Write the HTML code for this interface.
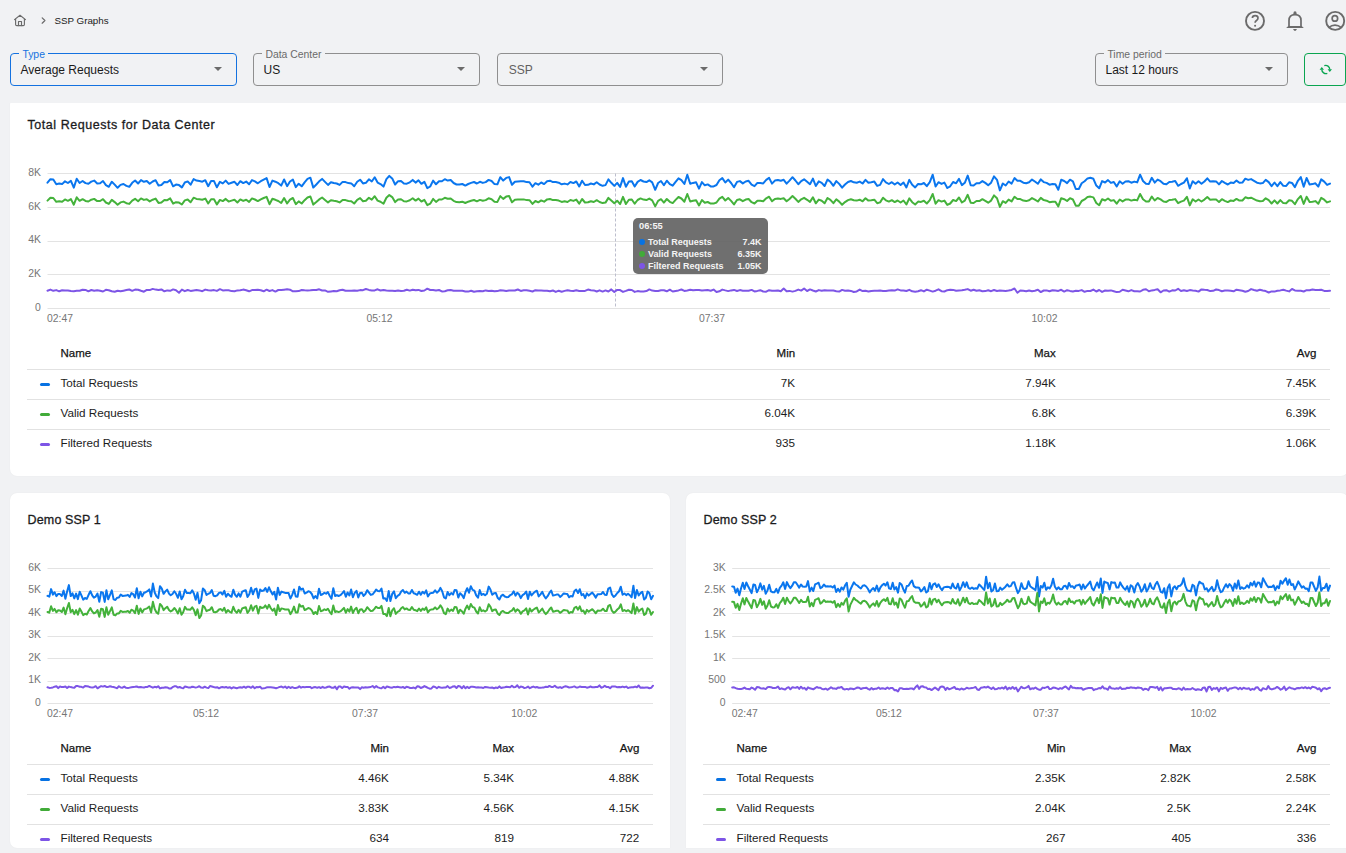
<!DOCTYPE html>
<html><head><meta charset="utf-8"><title>SSP Graphs</title>
<style>
*{box-sizing:border-box}
html,body{margin:0;padding:0}
body{width:1346px;height:853px;overflow:hidden;background:#f1f2f4;font-family:"Liberation Sans", sans-serif;color:#1d1d1f;position:relative}
.abs{position:absolute}
.crumb{position:absolute;left:54.4px;top:13.8px;font-size:9.8px;line-height:14px;color:#222}
.sel{position:absolute;top:53px;height:33px;border:1px solid #8f8f8f;border-radius:4px}
.sel .v{position:absolute;left:9.5px;top:9px;font-size:12px;line-height:14px;color:#1a1a1a;white-space:nowrap}
.sel .ph{color:#616161}
.sel .lg{position:absolute;top:-5.1px;left:8.1px;padding:0 3.3px;background:#f1f2f4;font-size:10.4px;line-height:12px;color:#6a6a6a;white-space:nowrap}
.sel .ar{position:absolute;right:14.5px;top:13px;width:0;height:0;border-left:4.3px solid transparent;border-right:4.3px solid transparent;border-top:4.9px solid #6b6b6b}
.sel.focus{border:1.4px solid #1472e0}
.sel.focus .lg{color:#1472e0}
.btn{position:absolute;left:1304px;top:53px;width:42px;height:33px;border:1.2px solid #0aa550;border-radius:4px}
.scroll{position:absolute;left:0;top:103px;width:1346px;height:750px;overflow:hidden}
.card{position:absolute;background:#fff;border-radius:7px;overflow:hidden;box-shadow:0 0 1.5px rgba(0,0,0,0.06)}
.ttl{position:absolute;left:17.6px;top:18.9px;font-size:12.5px;line-height:16px;white-space:nowrap;color:#1b1b1d;-webkit-text-stroke:0.3px #1b1b1d;letter-spacing:0.13px}
.ch{position:absolute;left:0;top:0}
.yl{font-family:"Liberation Sans", sans-serif;font-size:10.4px;fill:#767676}
.tb{position:absolute;left:17px;border-collapse:collapse;table-layout:fixed;font-size:11.7px;color:#1c1c1c}
.tb td{height:30px;padding:0 13.7px 0 0;text-align:right;border-bottom:1px solid #e2e2e2;white-space:nowrap;line-height:14px;vertical-align:middle}
.tb tr:last-child td{border-bottom:none}
.tb td u{text-decoration:none;position:relative;top:-1.5px}
.tb td.nm{width:40%;text-align:left;padding-left:33.5px;position:relative}
.tb tr.hd td{height:29.5px;font-size:11.5px;color:#151515;-webkit-text-stroke:0.25px #151515}
.tb td i{position:absolute;left:13px;top:12.8px;width:10px;height:3px;border-radius:2px}
.tip{position:absolute;left:623px;top:120px;width:135px;height:56px;background:rgba(100,100,100,0.93);border-radius:5px;color:#f4f4f4;font-weight:bold;font-size:9px;line-height:12px}
.tip .t{position:absolute;left:6px;top:2.3px;font-size:9.3px}
.tip .r{position:absolute;left:5.5px;right:6.5px;height:12px}
.tip .r b{display:inline-block;width:6.3px;height:6.3px;border-radius:50%;vertical-align:top;margin-top:2.6px;margin-right:3.2px}
.tip .r span{position:absolute;right:0;top:0}
</style></head>
<body>
<svg class="abs" style="left:0;top:0" width="1346" height="103" viewBox="0 0 1346 103">
 <g fill="none" stroke="#6b6b6b" stroke-width="1.15" stroke-linejoin="round" stroke-linecap="round">
  <path d="M14.5 19.6 L20 15.3 L25.5 19.6"/>
  <path d="M15.6 19 V24.4 Q15.6 25.6 16.8 25.6 H23.2 Q24.4 25.6 24.4 24.4 V19"/>
  <path d="M18.5 25.6 V21.5 H21.5 V25.6"/>
  <path d="M42.2 17.9 L44.9 20.55 L42.2 23.2" stroke-width="1.25"/>
 </g>
 <g fill="none" stroke="#6b6b6b" stroke-width="1.7">
  <circle cx="1255" cy="20.9" r="9.0" stroke-width="1.9"/>
  <circle cx="1335.2" cy="20.9" r="9.0" stroke-width="1.9"/>
  <circle cx="1334.9" cy="18.4" r="2.75" stroke-width="1.7"/>
  <path d="M1328.5 27.6 Q1335 22.6 1341.5 27.6" stroke-width="1.6"/>
  <path d="M1252.4 18.0 Q1252.4 15.6 1255.2 15.6 Q1258.0 15.6 1258.0 18.0 Q1258.0 19.4 1256.5 20.5 Q1255.1 21.4 1255.1 22.7" stroke-width="1.7"/>
 </g>
 <circle cx="1255.1" cy="25.8" r="1.05" fill="#6b6b6b"/>
 <path d="M1289.0 26.6 V20.6 Q1289.0 14.7 1295.0 14.7 Q1301.0 14.7 1301.0 20.6 V26.6" fill="none" stroke="#6b6b6b" stroke-width="1.7"/>
 <path d="M1293.2 14.3 L1293.8 11.8 Q1295.0 10.7 1296.2 11.8 L1296.8 14.3 Z" fill="#6b6b6b"/>
 <path d="M1286.2 28.1 L1288.3 25.9 H1301.7 L1303.8 28.1 Z" fill="#6b6b6b"/>
 <path d="M1293.0 28.9 H1297.0 L1295.8 30.8 H1294.2 Z" fill="#6b6b6b"/>
 <g fill="none" stroke="#0aa550" stroke-width="1.35" stroke-linecap="butt">
  <path d="M1324.3 65.6 A4.1 4.1 0 0 1 1329.8 69.4"/>
  <path d="M1327.3 73.3 A4.1 4.1 0 0 1 1321.8 69.6"/>
 </g>
 <path d="M1327.6 69.2 H1332 L1329.8 71.9 Z M1319.6 69.8 H1324 L1321.8 67.1 Z" fill="#0aa550"/>
</svg>
<div class="crumb">SSP Graphs</div>

<div class="sel focus" style="left:10px;width:227px"><span class="lg">Type</span><span class="v">Average Requests</span><i class="ar"></i></div>
<div class="sel" style="left:253px;width:227px"><span class="lg">Data Center</span><span class="v">US</span><i class="ar"></i></div>
<div class="sel" style="left:497px;width:226px"><span class="v ph" style="left:10.7px">SSP</span><i class="ar"></i></div>
<div class="sel" style="left:1095px;width:193px"><span class="lg">Time period</span><span class="v">Last 12 hours</span><i class="ar"></i></div>
<div class="btn"></div>

<div class="scroll">
 <div class="card" style="left:10px;top:-5px;width:1338px;height:378px">
  <div class="ttl" style="letter-spacing:0.53px">Total Requests for Data Center</div>
  <svg class="ch" width="1336" height="240" viewBox="0 0 1336 240">
<line x1="37.5" y1="75.5" x2="1320" y2="75.5" stroke="#e3e3e3" stroke-width="1"/>
<text x="30.9" y="77.8" text-anchor="end" class="yl">8K</text>
<line x1="37.5" y1="109.5" x2="1320" y2="109.5" stroke="#e3e3e3" stroke-width="1"/>
<text x="30.9" y="111.5" text-anchor="end" class="yl">6K</text>
<line x1="37.5" y1="143.5" x2="1320" y2="143.5" stroke="#e3e3e3" stroke-width="1"/>
<text x="30.9" y="145.3" text-anchor="end" class="yl">4K</text>
<line x1="37.5" y1="176.5" x2="1320" y2="176.5" stroke="#e3e3e3" stroke-width="1"/>
<text x="30.9" y="179.1" text-anchor="end" class="yl">2K</text>
<line x1="37.5" y1="210.5" x2="1320" y2="210.5" stroke="#e3e3e3" stroke-width="1"/>
<text x="30.9" y="212.8" text-anchor="end" class="yl">0</text>
<text x="37.0" y="223.8" text-anchor="start" class="yl">02:47</text>
<text x="369.5" y="223.8" text-anchor="middle" class="yl">05:12</text>
<text x="702.0" y="223.8" text-anchor="middle" class="yl">07:37</text>
<text x="1034.5" y="223.8" text-anchor="middle" class="yl">10:02</text>
<line x1="605.5" y1="75.5" x2="605.5" y2="210" stroke="#bcbecd" stroke-width="1" stroke-dasharray="3,2"/>
<polyline points="37.5,84.7 40.4,81.2 43.3,81.5 46.3,86.2 49.2,85.6 52.1,86.1 55.0,83.3 57.9,85.0 60.9,82.9 63.8,89.6 66.7,80.7 69.6,85.0 72.6,83.0 75.5,85.1 78.4,85.8 81.3,83.6 84.2,82.6 87.2,85.4 90.1,85.2 93.0,83.0 95.9,87.1 98.8,88.8 101.8,83.8 104.7,86.6 107.6,89.8 110.5,86.9 113.5,86.0 116.4,87.9 119.3,88.8 122.2,84.8 125.1,82.5 128.1,85.5 131.0,82.1 133.9,83.8 136.8,83.0 139.7,85.7 142.7,83.5 145.6,82.2 148.5,87.5 151.4,87.0 154.4,84.0 157.3,84.3 160.2,82.1 163.1,88.3 166.0,86.6 169.0,87.1 171.9,89.4 174.8,84.5 177.7,83.4 180.6,86.7 183.6,81.1 186.5,82.6 189.4,83.1 192.3,83.7 195.3,82.2 198.2,88.2 201.1,83.1 204.0,83.1 206.9,89.3 209.9,83.8 212.8,85.4 215.7,82.6 218.6,85.9 221.5,84.8 224.5,83.8 227.4,87.0 230.3,83.2 233.2,85.1 236.2,83.6 239.1,86.3 242.0,82.1 244.9,83.4 247.8,85.3 250.8,83.2 253.7,81.6 256.6,80.1 259.5,89.0 262.4,82.6 265.4,83.7 268.3,85.2 271.2,87.6 274.1,81.5 277.1,88.2 280.0,83.5 282.9,81.6 285.8,89.1 288.7,85.7 291.7,88.3 294.6,84.3 297.5,80.9 300.4,79.7 303.3,89.6 306.3,86.5 309.2,83.3 312.1,80.9 315.0,83.9 318.0,86.9 320.9,84.2 323.8,85.0 326.7,85.5 329.6,86.9 332.6,83.9 335.5,84.1 338.4,85.1 341.3,85.4 344.2,88.2 347.2,83.8 350.1,81.7 353.0,85.4 355.9,84.8 358.9,81.3 361.8,83.5 364.7,79.3 367.6,84.6 370.5,86.1 373.5,88.6 376.4,81.2 379.3,77.9 382.2,80.4 385.1,86.5 388.1,83.2 391.0,83.0 393.9,85.5 396.8,85.7 399.8,84.3 402.7,81.9 405.6,84.6 408.5,82.3 411.4,85.8 414.4,83.8 417.3,90.2 420.2,88.5 423.1,82.6 426.0,86.3 429.0,83.2 431.9,83.3 434.8,81.2 437.7,82.6 440.7,82.0 443.6,85.0 446.5,86.5 449.4,86.6 452.3,86.0 455.3,87.6 458.2,86.0 461.1,84.9 464.0,84.0 466.9,85.5 469.9,83.8 472.8,84.9 475.7,84.1 478.6,81.9 481.6,83.0 484.5,86.1 487.4,86.3 490.3,79.2 493.2,82.6 496.2,79.9 499.1,79.1 502.0,86.8 504.9,83.7 507.8,83.5 510.8,83.3 513.7,83.3 516.6,84.1 519.5,84.2 522.5,88.7 525.4,85.2 528.3,86.7 531.2,84.5 534.1,86.1 537.1,83.2 540.0,82.7 542.9,84.1 545.8,84.1 548.7,84.7 551.7,86.3 554.6,85.6 557.5,86.4 560.4,84.0 563.4,85.1 566.3,83.5 569.2,88.5 572.1,82.7 575.0,87.0 578.0,86.8 580.9,85.5 583.8,86.4 586.7,84.2 589.6,86.5 592.6,87.8 595.5,87.1 598.4,81.4 601.3,84.8 604.3,87.9 607.2,84.9 610.1,88.9 613.0,80.1 615.9,88.8 618.9,83.6 621.8,83.3 624.7,88.5 627.6,83.9 630.5,82.0 633.5,83.5 636.4,84.1 639.3,82.3 642.2,84.4 645.2,91.8 648.1,85.0 651.0,83.0 653.9,87.2 656.8,82.7 659.8,86.2 662.7,87.7 665.6,83.9 668.5,80.3 671.4,82.1 674.4,86.0 677.3,76.7 680.2,85.7 683.1,84.9 686.1,84.3 689.0,90.7 691.9,84.1 694.8,87.3 697.7,86.4 700.7,88.4 703.6,88.4 706.5,87.0 709.4,82.2 712.3,80.1 715.3,84.5 718.2,81.6 721.1,85.0 724.0,89.3 727.0,83.9 729.9,83.1 732.8,85.4 735.7,83.5 738.6,82.8 741.6,86.7 744.5,88.2 747.4,84.9 750.3,85.0 753.2,85.4 756.2,81.9 759.1,79.9 762.0,85.6 764.9,82.6 767.9,82.0 770.8,82.7 773.7,81.8 776.6,85.6 779.5,82.6 782.5,79.2 785.4,82.5 788.3,86.2 791.2,83.1 794.1,81.3 797.1,83.7 800.0,86.2 802.9,80.6 805.8,88.0 808.8,83.4 811.7,84.8 814.6,88.0 817.5,81.6 820.4,83.8 823.4,87.8 826.3,83.1 829.2,85.9 832.1,89.7 835.0,86.5 838.0,84.0 840.9,83.0 843.8,84.3 846.7,84.7 849.7,83.6 852.6,85.5 855.5,81.9 858.4,84.7 861.3,84.2 864.3,83.6 867.2,87.9 870.1,86.9 873.0,81.1 875.9,84.3 878.9,86.0 881.8,84.2 884.7,86.5 887.6,84.5 890.6,87.0 893.5,84.5 896.4,89.5 899.3,81.9 902.2,86.7 905.2,89.4 908.1,85.9 911.0,86.3 913.9,85.0 916.8,88.2 919.8,84.2 922.7,76.7 925.6,88.5 928.5,84.2 931.5,85.9 934.4,84.6 937.3,90.0 940.2,88.3 943.1,84.0 946.1,85.3 949.0,80.9 951.9,87.1 954.8,84.8 957.7,77.6 960.7,87.2 963.6,87.6 966.5,85.2 969.4,85.3 972.4,83.1 975.3,84.9 978.2,87.2 981.1,84.7 984.0,78.3 987.0,81.8 989.9,92.4 992.8,85.5 995.7,87.5 998.6,83.5 1001.6,85.6 1004.5,80.1 1007.4,82.7 1010.3,82.8 1013.3,84.7 1016.2,85.2 1019.1,84.2 1022.0,81.6 1024.9,83.5 1027.9,85.8 1030.8,81.4 1033.7,84.1 1036.6,84.9 1039.5,86.7 1042.5,86.0 1045.4,86.2 1048.3,91.8 1051.2,81.8 1054.2,83.0 1057.1,85.1 1060.0,81.7 1062.9,83.3 1065.8,91.0 1068.8,91.0 1071.7,85.2 1074.6,83.2 1077.5,80.4 1080.4,79.8 1083.4,80.8 1086.3,87.6 1089.2,90.3 1092.1,83.1 1095.1,84.5 1098.0,82.1 1100.9,84.9 1103.8,84.0 1106.7,88.5 1109.7,83.3 1112.6,85.7 1115.5,83.5 1118.4,83.2 1121.3,84.7 1124.3,83.6 1127.2,84.4 1130.1,76.7 1133.0,83.0 1136.0,85.8 1138.9,85.9 1141.8,79.8 1144.7,84.6 1147.6,81.6 1150.6,83.2 1153.5,85.8 1156.4,86.3 1159.3,84.0 1162.2,83.7 1165.2,82.9 1168.1,87.8 1171.0,86.0 1173.9,84.6 1176.9,80.2 1179.8,90.5 1182.7,83.2 1185.6,85.8 1188.5,83.3 1191.5,85.8 1194.4,83.5 1197.3,80.3 1200.2,83.6 1203.1,83.3 1206.1,83.4 1209.0,86.4 1211.9,83.0 1214.8,84.9 1217.8,86.5 1220.7,84.6 1223.6,85.1 1226.5,82.6 1229.4,84.7 1232.4,84.6 1235.3,80.7 1238.2,81.9 1241.1,81.1 1244.0,82.8 1247.0,84.7 1249.9,85.4 1252.8,85.1 1255.7,81.9 1258.7,84.1 1261.6,88.2 1264.5,84.5 1267.4,88.2 1270.3,84.1 1273.3,87.8 1276.2,87.9 1279.1,84.3 1282.0,84.9 1284.9,89.1 1287.9,82.8 1290.8,79.1 1293.7,88.7 1296.6,80.0 1299.6,86.6 1302.5,86.1 1305.4,85.3 1308.3,88.6 1311.2,81.4 1314.2,83.6 1317.1,86.9 1320.0,85.6" fill="none" stroke="#0a76ee" stroke-width="2" stroke-linejoin="round" stroke-linecap="round"/>
<polyline points="37.5,102.6 40.4,99.7 43.3,100.0 46.3,103.8 49.2,103.3 52.1,103.8 55.0,101.4 57.9,102.8 60.9,101.1 63.8,106.7 66.7,99.3 69.6,102.8 72.6,101.2 75.5,102.9 78.4,103.5 81.3,101.7 84.2,100.9 87.2,103.1 90.1,103.0 93.0,101.2 95.9,104.5 98.8,105.9 101.8,101.9 104.7,104.1 107.6,106.8 110.5,104.4 113.5,103.6 116.4,105.2 119.3,105.9 122.2,102.7 125.1,100.8 128.1,103.2 131.0,100.4 133.9,101.9 136.8,101.2 139.7,103.4 142.7,101.7 145.6,100.6 148.5,104.9 151.4,104.5 154.4,102.0 157.3,102.2 160.2,100.4 163.1,105.6 166.0,104.2 169.0,104.6 171.9,106.5 174.8,102.4 177.7,101.5 180.6,104.3 183.6,99.7 186.5,100.9 189.4,101.3 192.3,101.7 195.3,100.6 198.2,105.5 201.1,101.3 204.0,101.3 206.9,106.4 209.9,101.9 212.8,103.1 215.7,100.9 218.6,103.6 221.5,102.6 224.5,101.8 227.4,104.5 230.3,101.4 233.2,102.9 236.2,101.7 239.1,103.9 242.0,100.4 244.9,101.5 247.8,103.1 250.8,101.4 253.7,100.0 256.6,98.9 259.5,106.2 262.4,100.8 265.4,101.8 268.3,103.0 271.2,105.0 274.1,100.0 277.1,105.4 280.0,101.6 282.9,100.0 285.8,106.2 288.7,103.4 291.7,105.5 294.6,102.2 297.5,99.5 300.4,98.5 303.3,106.6 306.3,104.1 309.2,101.4 312.1,99.5 315.0,101.9 318.0,104.4 320.9,102.2 323.8,102.8 326.7,103.3 329.6,104.4 332.6,101.9 335.5,102.1 338.4,103.0 341.3,103.2 344.2,105.5 347.2,101.8 350.1,100.1 353.0,103.2 355.9,102.7 358.9,99.8 361.8,101.6 364.7,98.2 367.6,102.6 370.5,103.7 373.5,105.8 376.4,99.8 379.3,97.1 382.2,99.1 385.1,104.1 388.1,101.4 391.0,101.2 393.9,103.2 396.8,103.4 399.8,102.3 402.7,100.3 405.6,102.6 408.5,100.6 411.4,103.5 414.4,101.9 417.3,107.1 420.2,105.7 423.1,100.9 426.0,103.9 429.0,101.4 431.9,101.5 434.8,99.8 437.7,100.8 440.7,100.4 443.6,102.8 446.5,104.1 449.4,104.2 452.3,103.7 455.3,105.0 458.2,103.7 461.1,102.8 464.0,102.0 466.9,103.3 469.9,101.9 472.8,102.8 475.7,102.1 478.6,100.3 481.6,101.2 484.5,103.8 487.4,103.9 490.3,98.1 493.2,100.9 496.2,98.6 499.1,98.0 502.0,104.3 504.9,101.8 507.8,101.6 510.8,101.4 513.7,101.4 516.6,102.1 519.5,102.2 522.5,105.9 525.4,103.0 528.3,104.3 531.2,102.4 534.1,103.7 537.1,101.4 540.0,101.0 542.9,102.1 545.8,102.1 548.7,102.6 551.7,103.9 554.6,103.3 557.5,104.0 560.4,102.0 563.4,102.9 566.3,101.6 569.2,105.7 572.1,101.0 575.0,104.5 578.0,104.3 580.9,103.2 583.8,104.0 586.7,102.2 589.6,104.0 592.6,105.1 595.5,104.6 598.4,99.9 601.3,102.6 604.3,105.3 607.2,102.7 610.1,106.1 613.0,98.9 615.9,106.0 618.9,101.7 621.8,101.5 624.7,105.7 627.6,102.0 630.5,100.4 633.5,101.6 636.4,102.1 639.3,100.6 642.2,102.4 645.2,108.4 648.1,102.9 651.0,101.2 653.9,104.6 656.8,101.0 659.8,103.8 662.7,105.1 665.6,101.9 668.5,99.0 671.4,100.5 674.4,103.7 677.3,96.0 680.2,103.5 683.1,102.8 686.1,102.3 689.0,107.5 691.9,102.1 694.8,104.7 697.7,104.0 700.7,105.6 703.6,105.6 706.5,104.5 709.4,100.6 712.3,98.8 715.3,102.5 718.2,100.0 721.1,102.9 724.0,106.4 727.0,102.0 729.9,101.3 732.8,103.2 735.7,101.6 738.6,101.0 741.6,104.2 744.5,105.5 747.4,102.8 750.3,102.8 753.2,103.2 756.2,100.3 759.1,98.7 762.0,103.3 764.9,100.9 767.9,100.4 770.8,100.9 773.7,100.2 776.6,103.3 779.5,100.9 782.5,98.1 785.4,100.8 788.3,103.9 791.2,101.3 794.1,99.8 797.1,101.8 800.0,103.9 802.9,99.3 805.8,105.3 808.8,101.6 811.7,102.7 814.6,105.3 817.5,100.0 820.4,101.9 823.4,105.2 826.3,101.3 829.2,103.6 832.1,106.7 835.0,104.1 838.0,102.1 840.9,101.2 843.8,102.2 846.7,102.6 849.7,101.7 852.6,103.3 855.5,100.3 858.4,102.6 861.3,102.2 864.3,101.7 867.2,105.2 870.1,104.4 873.0,99.7 875.9,102.3 878.9,103.6 881.8,102.2 884.7,104.1 887.6,102.5 890.6,104.5 893.5,102.5 896.4,106.5 899.3,100.3 902.2,104.2 905.2,106.5 908.1,103.6 911.0,103.9 913.9,102.8 916.8,105.5 919.8,102.2 922.7,96.0 925.6,105.7 928.5,102.2 931.5,103.6 934.4,102.6 937.3,106.9 940.2,105.5 943.1,102.0 946.1,103.1 949.0,99.5 951.9,104.5 954.8,102.6 957.7,96.8 960.7,104.7 963.6,105.0 966.5,103.0 969.4,103.1 972.4,101.2 975.3,102.8 978.2,104.7 981.1,102.6 984.0,97.4 987.0,100.3 989.9,108.9 992.8,103.2 995.7,104.9 998.6,101.6 1001.6,103.4 1004.5,98.8 1007.4,101.0 1010.3,101.1 1013.3,102.6 1016.2,103.1 1019.1,102.2 1022.0,100.1 1024.9,101.6 1027.9,103.5 1030.8,99.9 1033.7,102.1 1036.6,102.7 1039.5,104.2 1042.5,103.7 1045.4,103.8 1048.3,108.4 1051.2,100.2 1054.2,101.2 1057.1,103.0 1060.0,100.2 1062.9,101.5 1065.8,107.7 1068.8,107.8 1071.7,103.0 1074.6,101.4 1077.5,99.0 1080.4,98.6 1083.4,99.4 1086.3,105.0 1089.2,107.2 1092.1,101.3 1095.1,102.5 1098.0,100.5 1100.9,102.8 1103.8,102.1 1106.7,105.7 1109.7,101.5 1112.6,103.4 1115.5,101.6 1118.4,101.4 1121.3,102.6 1124.3,101.7 1127.2,102.4 1130.1,96.0 1133.0,101.2 1136.0,103.5 1138.9,103.6 1141.8,98.6 1144.7,102.5 1147.6,100.0 1150.6,101.4 1153.5,103.5 1156.4,103.9 1159.3,102.0 1162.2,101.8 1165.2,101.1 1168.1,105.1 1171.0,103.6 1173.9,102.6 1176.9,98.9 1179.8,107.4 1182.7,101.3 1185.6,103.5 1188.5,101.5 1191.5,103.5 1194.4,101.6 1197.3,99.0 1200.2,101.7 1203.1,101.5 1206.1,101.6 1209.0,104.0 1211.9,101.2 1214.8,102.8 1217.8,104.1 1220.7,102.5 1223.6,102.9 1226.5,100.9 1229.4,102.6 1232.4,102.5 1235.3,99.3 1238.2,100.3 1241.1,99.7 1244.0,101.1 1247.0,102.6 1249.9,103.2 1252.8,103.0 1255.7,100.3 1258.7,102.1 1261.6,105.5 1264.5,102.4 1267.4,105.5 1270.3,102.1 1273.3,105.1 1276.2,105.2 1279.1,102.3 1282.0,102.8 1284.9,106.2 1287.9,101.1 1290.8,98.0 1293.7,105.9 1296.6,98.8 1299.6,104.1 1302.5,103.8 1305.4,103.1 1308.3,105.8 1311.2,99.9 1314.2,101.7 1317.1,104.4 1320.0,103.4" fill="none" stroke="#44b23b" stroke-width="2" stroke-linejoin="round" stroke-linecap="round"/>
<polyline points="37.5,192.7 40.4,191.6 43.3,192.8 46.3,192.1 49.2,193.3 52.1,192.3 55.0,192.4 57.9,192.4 60.9,192.9 63.8,193.2 66.7,192.7 69.6,192.8 72.6,191.8 75.5,191.9 78.4,193.3 81.3,192.0 84.2,192.8 87.2,192.2 90.1,192.8 93.0,193.5 95.9,191.8 98.8,192.2 101.8,193.3 104.7,193.8 107.6,192.8 110.5,193.3 113.5,192.7 116.4,192.1 119.3,191.5 122.2,192.8 125.1,191.6 128.1,191.7 131.0,192.8 133.9,193.7 136.8,191.9 139.7,192.1 142.7,190.9 145.6,191.6 148.5,192.0 151.4,191.4 154.4,193.3 157.3,192.4 160.2,192.8 163.1,191.4 166.0,192.2 169.0,194.7 171.9,191.6 174.8,193.2 177.7,192.0 180.6,192.9 183.6,192.4 186.5,192.1 189.4,192.4 192.3,193.2 195.3,191.6 198.2,192.3 201.1,192.6 204.0,192.1 206.9,192.9 209.9,191.2 212.8,192.4 215.7,192.3 218.6,192.3 221.5,193.1 224.5,193.3 227.4,192.4 230.3,192.3 233.2,191.6 236.2,192.2 239.1,193.3 242.0,192.1 244.9,191.9 247.8,191.8 250.8,192.3 253.7,193.3 256.6,191.7 259.5,193.0 262.4,192.1 265.4,193.6 268.3,192.0 271.2,192.1 274.1,191.7 277.1,191.3 280.0,191.7 282.9,193.3 285.8,193.2 288.7,193.1 291.7,192.0 294.6,192.3 297.5,192.4 300.4,192.3 303.3,192.0 306.3,192.0 309.2,191.3 312.1,192.5 315.0,192.4 318.0,193.8 320.9,193.4 323.8,193.0 326.7,193.3 329.6,192.3 332.6,191.7 335.5,192.8 338.4,192.8 341.3,192.8 344.2,192.4 347.2,192.8 350.1,192.1 353.0,192.2 355.9,191.0 358.9,191.9 361.8,192.4 364.7,192.4 367.6,191.3 370.5,192.5 373.5,192.0 376.4,192.5 379.3,192.8 382.2,192.8 385.1,193.1 388.1,192.5 391.0,192.9 393.9,192.8 396.8,191.7 399.8,192.6 402.7,191.7 405.6,192.3 408.5,191.9 411.4,193.0 414.4,192.5 417.3,190.7 420.2,192.0 423.1,191.9 426.0,192.4 429.0,192.0 431.9,193.4 434.8,193.2 437.7,192.3 440.7,192.0 443.6,192.8 446.5,192.7 449.4,192.8 452.3,192.7 455.3,193.5 458.2,193.6 461.1,192.7 464.0,193.8 466.9,193.3 469.9,193.1 472.8,193.3 475.7,192.4 478.6,192.9 481.6,192.7 484.5,193.3 487.4,193.1 490.3,192.3 493.2,192.4 496.2,192.9 499.1,192.4 502.0,192.5 504.9,192.5 507.8,191.5 510.8,192.9 513.7,192.3 516.6,192.3 519.5,192.8 522.5,193.5 525.4,192.2 528.3,192.5 531.2,192.6 534.1,192.7 537.1,192.7 540.0,193.3 542.9,192.5 545.8,193.9 548.7,192.7 551.7,193.7 554.6,192.9 557.5,192.2 560.4,192.8 563.4,193.0 566.3,192.3 569.2,192.9 572.1,193.0 575.0,192.9 578.0,191.6 580.9,192.2 583.8,192.4 586.7,193.5 589.6,192.3 592.6,193.6 595.5,192.4 598.4,193.5 601.3,191.4 604.3,193.9 607.2,191.9 610.1,192.1 613.0,193.9 615.9,192.9 618.9,191.7 621.8,192.0 624.7,193.9 627.6,193.1 630.5,193.5 633.5,193.4 636.4,193.1 639.3,191.4 642.2,192.6 645.2,192.9 648.1,193.0 651.0,192.3 653.9,192.2 656.8,193.3 659.8,191.7 662.7,193.5 665.6,192.9 668.5,192.4 671.4,191.5 674.4,192.9 677.3,192.5 680.2,191.8 683.1,192.3 686.1,191.9 689.0,192.0 691.9,192.5 694.8,192.3 697.7,192.1 700.7,192.7 703.6,191.6 706.5,194.0 709.4,193.3 712.3,191.6 715.3,192.4 718.2,193.1 721.1,192.4 724.0,191.9 727.0,193.0 729.9,192.1 732.8,192.7 735.7,192.7 738.6,192.7 741.6,191.9 744.5,193.4 747.4,192.9 750.3,192.2 753.2,193.5 756.2,193.7 759.1,192.2 762.0,192.7 764.9,192.8 767.9,192.5 770.8,193.3 773.7,190.6 776.6,193.3 779.5,192.9 782.5,193.6 785.4,192.9 788.3,191.6 791.2,192.6 794.1,190.5 797.1,193.0 800.0,191.4 802.9,192.5 805.8,193.5 808.8,192.1 811.7,192.8 814.6,192.2 817.5,192.5 820.4,192.4 823.4,192.5 826.3,193.2 829.2,193.6 832.1,191.9 835.0,192.7 838.0,192.4 840.9,192.9 843.8,194.0 846.7,193.4 849.7,191.6 852.6,193.1 855.5,192.8 858.4,193.5 861.3,192.9 864.3,192.8 867.2,192.7 870.1,192.6 873.0,193.0 875.9,192.9 878.9,192.5 881.8,192.3 884.7,192.6 887.6,191.4 890.6,192.4 893.5,192.4 896.4,193.0 899.3,191.8 902.2,193.3 905.2,193.7 908.1,193.3 911.0,192.2 913.9,193.4 916.8,191.7 919.8,192.6 922.7,193.6 925.6,192.7 928.5,191.3 931.5,193.2 934.4,193.5 937.3,192.2 940.2,191.7 943.1,191.9 946.1,192.8 949.0,192.4 951.9,192.3 954.8,191.8 957.7,191.1 960.7,192.7 963.6,191.7 966.5,192.8 969.4,192.2 972.4,193.2 975.3,193.1 978.2,192.3 981.1,193.2 984.0,192.0 987.0,193.0 989.9,192.5 992.8,192.7 995.7,192.9 998.6,192.5 1001.6,191.9 1004.5,190.5 1007.4,194.8 1010.3,192.5 1013.3,192.8 1016.2,193.3 1019.1,192.5 1022.0,193.3 1024.9,192.7 1027.9,191.8 1030.8,194.1 1033.7,192.5 1036.6,192.4 1039.5,193.3 1042.5,192.3 1045.4,192.4 1048.3,192.9 1051.2,191.8 1054.2,193.6 1057.1,192.2 1060.0,192.9 1062.9,193.4 1065.8,192.8 1068.8,192.9 1071.7,192.1 1074.6,193.8 1077.5,192.9 1080.4,193.0 1083.4,191.6 1086.3,193.5 1089.2,192.0 1092.1,193.9 1095.1,192.5 1098.0,192.8 1100.9,192.4 1103.8,193.2 1106.7,194.1 1109.7,193.8 1112.6,191.8 1115.5,192.5 1118.4,193.3 1121.3,192.1 1124.3,193.2 1127.2,193.2 1130.1,193.5 1133.0,191.8 1136.0,191.3 1138.9,193.3 1141.8,192.4 1144.7,191.9 1147.6,191.2 1150.6,194.3 1153.5,192.5 1156.4,192.2 1159.3,193.6 1162.2,192.3 1165.2,192.5 1168.1,190.8 1171.0,193.0 1173.9,192.3 1176.9,193.0 1179.8,192.1 1182.7,192.5 1185.6,192.8 1188.5,193.6 1191.5,191.4 1194.4,191.8 1197.3,192.0 1200.2,193.1 1203.1,192.8 1206.1,191.5 1209.0,192.1 1211.9,193.2 1214.8,192.6 1217.8,192.5 1220.7,192.8 1223.6,193.3 1226.5,191.7 1229.4,192.2 1232.4,192.7 1235.3,193.7 1238.2,193.0 1241.1,191.1 1244.0,192.0 1247.0,192.8 1249.9,191.8 1252.8,192.5 1255.7,193.1 1258.7,194.5 1261.6,193.4 1264.5,193.6 1267.4,192.7 1270.3,192.4 1273.3,191.7 1276.2,192.6 1279.1,193.4 1282.0,191.0 1284.9,192.4 1287.9,192.8 1290.8,192.8 1293.7,193.5 1296.6,192.2 1299.6,192.3 1302.5,191.5 1305.4,191.9 1308.3,192.0 1311.2,191.8 1314.2,192.9 1317.1,193.0 1320.0,192.7" fill="none" stroke="#7d55e6" stroke-width="2" stroke-linejoin="round" stroke-linecap="round"/>
</svg>
  <div class="tip"><span class="t">06:55</span>
   <div class="r" style="top:18px"><b style="background:#0772e3"></b>Total Requests<span>7.4K</span></div>
   <div class="r" style="top:30px"><b style="background:#41ab39"></b>Valid Requests<span>6.35K</span></div>
   <div class="r" style="top:42px"><b style="background:#7d55e6"></b>Filtered Requests<span>1.05K</span></div>
  </div>
  <div style="position:absolute;left:0;top:242px"><table class="tb" style="width:1303px"><tr class="hd"><td class="nm"><u>Name</u></td><td><u>Min</u></td><td><u>Max</u></td><td><u>Avg</u></td></tr><tr><td class="nm"><i style="background:#0772e3"></i><u>Total Requests</u></td><td><u>7K</u></td><td><u>7.94K</u></td><td><u>7.45K</u></td></tr><tr><td class="nm"><i style="background:#41ab39"></i><u>Valid Requests</u></td><td><u>6.04K</u></td><td><u>6.8K</u></td><td><u>6.39K</u></td></tr><tr><td class="nm"><i style="background:#7d55e6"></i><u>Filtered Requests</u></td><td><u>935</u></td><td><u>1.18K</u></td><td><u>1.06K</u></td></tr></table></div>
 </div>
 <div class="card" style="left:10px;top:390px;width:660px;height:355px;border-radius:7px 7px 0 7px">
  <div class="ttl">Demo SSP 1</div>
  <svg class="ch" width="660" height="240" viewBox="0 0 660 240">
<line x1="37.5" y1="75.5" x2="643" y2="75.5" stroke="#e3e3e3" stroke-width="1"/>
<text x="30.9" y="77.8" text-anchor="end" class="yl">6K</text>
<line x1="37.5" y1="98.5" x2="643" y2="98.5" stroke="#e3e3e3" stroke-width="1"/>
<text x="30.9" y="100.3" text-anchor="end" class="yl">5K</text>
<line x1="37.5" y1="120.5" x2="643" y2="120.5" stroke="#e3e3e3" stroke-width="1"/>
<text x="30.9" y="122.8" text-anchor="end" class="yl">4K</text>
<line x1="37.5" y1="143.5" x2="643" y2="143.5" stroke="#e3e3e3" stroke-width="1"/>
<text x="30.9" y="145.3" text-anchor="end" class="yl">3K</text>
<line x1="37.5" y1="165.5" x2="643" y2="165.5" stroke="#e3e3e3" stroke-width="1"/>
<text x="30.9" y="167.8" text-anchor="end" class="yl">2K</text>
<line x1="37.5" y1="188.5" x2="643" y2="188.5" stroke="#e3e3e3" stroke-width="1"/>
<text x="30.9" y="190.3" text-anchor="end" class="yl">1K</text>
<line x1="37.5" y1="210.5" x2="643" y2="210.5" stroke="#e3e3e3" stroke-width="1"/>
<text x="30.9" y="212.8" text-anchor="end" class="yl">0</text>
<text x="37.0" y="223.8" text-anchor="start" class="yl">02:47</text>
<text x="196.1" y="223.8" text-anchor="middle" class="yl">05:12</text>
<text x="355.1" y="223.8" text-anchor="middle" class="yl">07:37</text>
<text x="514.2" y="223.8" text-anchor="middle" class="yl">10:02</text>

<polyline points="37.5,102.9 39.3,103.7 41.1,96.1 42.9,101.6 44.6,99.2 46.4,103.2 48.2,100.9 50.0,101.1 51.8,103.0 53.6,97.6 55.4,105.7 57.1,98.5 58.9,92.1 60.7,103.1 62.5,100.4 64.3,105.4 66.1,100.6 67.9,106.1 69.7,98.8 71.4,102.4 73.2,106.7 75.0,105.0 76.8,105.9 78.6,101.8 80.4,98.2 82.2,102.3 83.9,104.7 85.7,103.6 87.5,100.6 89.3,108.7 91.1,99.1 92.9,99.7 94.7,108.9 96.4,97.3 98.2,106.3 100.0,101.8 101.8,97.4 103.6,106.4 105.4,107.0 107.2,104.7 108.9,104.6 110.7,101.6 112.5,102.9 114.3,102.7 116.1,102.6 117.9,101.8 119.7,103.9 121.4,100.1 123.2,101.2 125.0,104.5 126.8,95.3 128.6,105.2 130.4,98.7 132.2,103.4 134.0,99.8 135.7,99.2 137.5,98.2 139.3,96.4 141.1,103.6 142.9,90.6 144.7,99.5 146.5,103.4 148.2,105.1 150.0,93.2 151.8,95.6 153.6,100.8 155.4,98.4 157.2,96.6 159.0,100.6 160.7,102.3 162.5,101.0 164.3,98.2 166.1,100.8 167.9,104.8 169.7,98.5 171.5,106.3 173.2,103.2 175.0,96.8 176.8,99.9 178.6,99.9 180.4,100.2 182.2,97.3 184.0,100.7 185.7,106.8 187.5,99.8 189.3,110.3 191.1,107.2 192.9,95.5 194.7,97.2 196.5,102.0 198.3,100.7 200.0,100.1 201.8,97.1 203.6,102.8 205.4,103.2 207.2,102.4 209.0,99.9 210.8,99.4 212.5,101.5 214.3,97.9 216.1,103.7 217.9,100.7 219.7,102.7 221.5,103.8 223.3,96.7 225.0,101.6 226.8,103.8 228.6,100.4 230.4,103.7 232.2,98.7 234.0,97.8 235.8,97.2 237.5,104.0 239.3,101.2 241.1,94.8 242.9,101.3 244.7,96.5 246.5,95.6 248.3,104.9 250.1,96.6 251.8,98.0 253.6,97.6 255.4,95.0 257.2,98.9 259.0,94.3 260.8,98.3 262.6,101.5 264.3,98.8 266.1,106.6 267.9,94.7 269.7,101.9 271.5,98.6 273.3,99.3 275.1,99.9 276.8,99.9 278.6,100.1 280.4,105.5 282.2,101.9 284.0,96.5 285.8,103.5 287.6,103.7 289.3,93.7 291.1,96.6 292.9,95.5 294.7,100.5 296.5,99.7 298.3,98.2 300.1,98.9 301.8,101.0 303.6,105.4 305.4,103.0 307.2,105.5 309.0,95.7 310.8,102.0 312.6,101.3 314.4,99.8 316.1,100.7 317.9,99.1 319.7,102.8 321.5,105.7 323.3,95.2 325.1,103.0 326.9,102.1 328.6,103.0 330.4,102.2 332.2,100.4 334.0,98.0 335.8,103.8 337.6,99.5 339.4,102.5 341.1,96.5 342.9,104.2 344.7,99.9 346.5,97.8 348.3,104.5 350.1,99.9 351.9,99.8 353.6,102.9 355.4,101.0 357.2,97.2 359.0,99.6 360.8,101.9 362.6,101.3 364.4,99.2 366.1,96.6 367.9,98.1 369.7,98.2 371.5,95.6 373.3,105.5 375.1,105.2 376.9,107.9 378.7,98.1 380.4,108.0 382.2,100.9 384.0,98.4 385.8,105.2 387.6,102.8 389.4,101.7 391.2,98.5 392.9,97.0 394.7,99.8 396.5,98.6 398.3,100.4 400.1,100.4 401.9,97.0 403.7,100.2 405.4,100.8 407.2,101.8 409.0,98.7 410.8,101.7 412.6,98.8 414.4,100.6 416.2,97.4 417.9,103.5 419.7,100.7 421.5,99.9 423.3,99.7 425.1,97.4 426.9,99.7 428.7,98.1 430.4,94.9 432.2,98.3 434.0,104.3 435.8,105.5 437.6,98.9 439.4,102.2 441.2,100.1 443.0,101.6 444.7,96.9 446.5,97.2 448.3,104.5 450.1,100.2 451.9,102.0 453.7,105.1 455.5,99.0 457.2,95.2 459.0,99.7 460.8,93.3 462.6,96.9 464.4,97.6 466.2,102.4 468.0,104.7 469.7,97.1 471.5,102.0 473.3,100.9 475.1,102.3 476.9,100.8 478.7,93.6 480.5,96.8 482.2,101.8 484.0,100.2 485.8,99.9 487.6,104.7 489.4,106.5 491.2,102.9 493.0,101.7 494.8,103.5 496.5,104.2 498.3,104.0 500.1,102.2 501.9,101.3 503.7,98.3 505.5,102.6 507.3,99.8 509.0,101.3 510.8,105.1 512.6,102.1 514.4,100.9 516.2,98.5 518.0,106.0 519.8,98.8 521.5,102.4 523.3,100.3 525.1,98.7 526.9,97.7 528.7,103.4 530.5,101.4 532.3,98.8 534.0,102.8 535.8,105.5 537.6,103.2 539.4,99.9 541.2,97.5 543.0,102.6 544.8,102.1 546.5,101.6 548.3,101.5 550.1,103.9 551.9,102.4 553.7,100.4 555.5,100.8 557.3,101.0 559.1,104.3 560.8,103.0 562.6,103.5 564.4,98.0 566.2,96.6 568.0,100.0 569.8,96.2 571.6,102.2 573.3,101.1 575.1,105.1 576.9,100.4 578.7,102.6 580.5,100.9 582.3,99.6 584.1,101.9 585.8,104.6 587.6,101.3 589.4,101.3 591.2,101.1 593.0,99.0 594.8,101.7 596.6,101.9 598.3,95.6 600.1,94.6 601.9,101.4 603.7,104.0 605.5,102.4 607.3,100.0 609.1,98.2 610.8,93.7 612.6,101.8 614.4,100.5 616.2,102.1 618.0,100.8 619.8,102.2 621.6,104.3 623.4,92.7 625.1,105.1 626.9,97.0 628.7,102.5 630.5,100.1 632.3,98.8 634.1,106.6 635.9,104.8 637.6,98.4 639.4,100.3 641.2,106.3 643.0,102.9" fill="none" stroke="#0a76ee" stroke-width="2" stroke-linejoin="round" stroke-linecap="round"/>
<polyline points="37.5,119.0 39.3,119.6 41.1,113.3 42.9,117.9 44.6,115.9 46.4,119.2 48.2,117.3 50.0,117.5 51.8,119.0 53.6,114.6 55.4,121.2 57.1,115.3 58.9,110.0 60.7,119.2 62.5,116.9 64.3,121.1 66.1,117.1 67.9,121.6 69.7,115.5 71.4,118.5 73.2,122.1 75.0,120.7 76.8,121.5 78.6,118.0 80.4,115.1 82.2,118.4 83.9,120.4 85.7,119.5 87.5,117.0 89.3,123.8 91.1,115.8 92.9,116.3 94.7,123.9 96.4,114.3 98.2,121.8 100.0,118.1 101.8,114.4 103.6,121.8 105.4,122.4 107.2,120.4 108.9,120.4 110.7,117.9 112.5,118.9 114.3,118.8 116.1,118.7 117.9,118.0 119.7,119.7 121.4,116.7 123.2,117.6 125.0,120.2 126.8,112.7 128.6,120.9 130.4,115.5 132.2,119.4 134.0,116.4 135.7,115.9 137.5,115.1 139.3,113.6 141.1,119.5 142.9,108.8 144.7,116.1 146.5,119.4 148.2,120.8 150.0,110.9 151.8,112.9 153.6,117.2 155.4,115.2 157.2,113.7 159.0,117.0 160.7,118.4 162.5,117.4 164.3,115.0 166.1,117.2 167.9,120.5 169.7,115.3 171.5,121.8 173.2,119.2 175.0,113.9 176.8,116.5 178.6,116.4 180.4,116.7 182.2,114.3 184.0,117.1 185.7,122.2 187.5,116.4 189.3,125.1 191.1,122.5 192.9,112.8 194.7,114.3 196.5,118.2 198.3,117.2 200.0,116.7 201.8,114.2 203.6,118.9 205.4,119.2 207.2,118.5 209.0,116.5 210.8,116.1 212.5,117.8 214.3,114.8 216.1,119.6 217.9,117.1 219.7,118.8 221.5,119.7 223.3,113.8 225.0,117.9 226.8,119.7 228.6,116.9 230.4,119.6 232.2,115.4 234.0,114.7 235.8,114.2 237.5,119.9 239.3,117.5 241.1,112.2 242.9,117.6 244.7,113.7 246.5,112.9 248.3,120.6 250.1,113.7 251.8,114.9 253.6,114.6 255.4,112.4 257.2,115.6 259.0,111.8 260.8,115.2 262.6,117.8 264.3,115.5 266.1,122.1 267.9,112.1 269.7,118.1 271.5,115.4 273.3,115.9 275.1,116.5 276.8,116.5 278.6,116.6 280.4,121.1 282.2,118.2 284.0,113.6 285.8,119.5 287.6,119.6 289.3,111.3 291.1,113.7 292.9,112.8 294.7,117.0 296.5,116.3 298.3,115.0 300.1,115.6 301.8,117.4 303.6,121.0 305.4,119.0 307.2,121.1 309.0,113.0 310.8,118.2 312.6,117.6 314.4,116.3 316.1,117.1 317.9,115.8 319.7,118.8 321.5,121.2 323.3,112.5 325.1,119.0 326.9,118.3 328.6,119.1 330.4,118.4 332.2,116.8 334.0,114.9 335.8,119.7 337.6,116.1 339.4,118.6 341.1,113.6 342.9,120.0 344.7,116.4 346.5,114.8 348.3,120.3 350.1,116.5 351.9,116.3 353.6,118.9 355.4,117.4 357.2,114.2 359.0,116.2 360.8,118.1 362.6,117.7 364.4,115.9 366.1,113.7 367.9,115.0 369.7,115.1 371.5,112.9 373.3,121.1 375.1,120.9 376.9,123.1 378.7,115.0 380.4,123.2 382.2,117.3 384.0,115.2 385.8,120.9 387.6,118.9 389.4,117.9 391.2,115.3 392.9,114.0 394.7,116.4 396.5,115.4 398.3,116.8 400.1,116.9 401.9,114.0 403.7,116.7 405.4,117.2 407.2,118.1 409.0,115.5 410.8,117.9 412.6,115.6 414.4,117.0 416.2,114.4 417.9,119.4 419.7,117.1 421.5,116.4 423.3,116.3 425.1,114.4 426.9,116.3 428.7,115.0 430.4,112.3 432.2,115.1 434.0,120.1 435.8,121.1 437.6,115.6 439.4,118.4 441.2,116.6 443.0,117.9 444.7,114.0 446.5,114.2 448.3,120.3 450.1,116.7 451.9,118.2 453.7,120.8 455.5,115.7 457.2,112.6 459.0,116.3 460.8,111.0 462.6,114.0 464.4,114.6 466.2,118.5 468.0,120.5 469.7,114.2 471.5,118.2 473.3,117.3 475.1,118.5 476.9,117.2 478.7,111.2 480.5,113.9 482.2,118.1 484.0,116.7 485.8,116.5 487.6,120.4 489.4,122.0 491.2,118.9 493.0,117.9 494.8,119.4 496.5,120.0 498.3,119.9 500.1,118.4 501.9,117.6 503.7,115.1 505.5,118.7 507.3,116.4 509.0,117.6 510.8,120.8 512.6,118.3 514.4,117.3 516.2,115.3 518.0,121.5 519.8,115.5 521.5,118.5 523.3,116.8 525.1,115.5 526.9,114.6 528.7,119.4 530.5,117.7 532.3,115.6 534.0,118.9 535.8,121.1 537.6,119.2 539.4,116.5 541.2,114.5 543.0,118.7 544.8,118.3 546.5,117.8 548.3,117.8 550.1,119.8 551.9,118.6 553.7,116.9 555.5,117.2 557.3,117.4 559.1,120.1 560.8,119.0 562.6,119.4 564.4,114.8 566.2,113.8 568.0,116.6 569.8,113.4 571.6,118.3 573.3,117.5 575.1,120.8 576.9,116.9 578.7,118.7 580.5,117.3 582.3,116.2 584.1,118.1 585.8,120.3 587.6,117.6 589.4,117.7 591.2,117.4 593.0,115.7 594.8,117.9 596.6,118.1 598.3,112.9 600.1,112.0 601.9,117.7 603.7,119.8 605.5,118.6 607.3,116.5 609.1,115.0 610.8,111.3 612.6,118.1 614.4,117.0 616.2,118.3 618.0,117.2 619.8,118.4 621.6,120.1 623.4,110.5 625.1,120.8 626.9,114.1 628.7,118.6 630.5,116.6 632.3,115.6 634.1,122.0 635.9,120.6 637.6,115.2 639.4,116.8 641.2,121.8 643.0,119.0" fill="none" stroke="#44b23b" stroke-width="2" stroke-linejoin="round" stroke-linecap="round"/>
<polyline points="37.5,194.3 39.3,194.9 41.1,194.8 42.9,194.4 44.6,193.7 46.4,193.2 48.2,195.1 50.0,193.4 51.8,194.1 53.6,193.9 55.4,193.5 57.1,194.9 58.9,193.6 60.7,194.1 62.5,194.5 64.3,194.8 66.1,193.0 67.9,193.1 69.7,193.7 71.4,193.8 73.2,194.6 75.0,193.0 76.8,193.2 78.6,193.6 80.4,194.3 82.2,194.4 83.9,194.2 85.7,193.2 87.5,195.3 89.3,194.1 91.1,193.1 92.9,193.6 94.7,193.0 96.4,193.9 98.2,193.9 100.0,193.3 101.8,193.8 103.6,194.0 105.4,194.6 107.2,195.2 108.9,193.2 110.7,194.5 112.5,194.7 114.3,193.6 116.1,194.8 117.9,195.1 119.7,194.6 121.4,194.2 123.2,194.0 125.0,193.8 126.8,193.5 128.6,194.3 130.4,193.9 132.2,194.3 134.0,194.6 135.7,193.9 137.5,193.9 139.3,192.9 141.1,193.8 142.9,194.7 144.7,193.8 146.5,194.4 148.2,193.2 150.0,195.4 151.8,194.7 153.6,194.7 155.4,194.2 157.2,194.4 159.0,195.4 160.7,195.6 162.5,194.2 164.3,193.3 166.1,193.3 167.9,194.6 169.7,194.0 171.5,194.9 173.2,195.3 175.0,193.5 176.8,193.9 178.6,194.6 180.4,194.6 182.2,193.7 184.0,194.1 185.7,194.6 187.5,194.1 189.3,193.2 191.1,194.6 192.9,194.8 194.7,193.7 196.5,194.6 198.3,195.1 200.0,193.1 201.8,193.5 203.6,194.0 205.4,194.4 207.2,194.2 209.0,195.3 210.8,194.3 212.5,194.1 214.3,194.4 216.1,194.0 217.9,194.8 219.7,194.2 221.5,195.4 223.3,194.3 225.0,194.7 226.8,195.2 228.6,194.6 230.4,194.3 232.2,194.7 234.0,193.7 235.8,194.8 237.5,193.7 239.3,193.8 241.1,194.8 242.9,193.4 244.7,195.3 246.5,194.0 248.3,194.3 250.1,193.8 251.8,195.4 253.6,195.2 255.4,194.9 257.2,194.3 259.0,194.3 260.8,194.3 262.6,194.5 264.3,194.8 266.1,195.2 267.9,194.6 269.7,193.9 271.5,193.6 273.3,194.6 275.1,193.5 276.8,195.1 278.6,193.7 280.4,195.0 282.2,194.1 284.0,194.9 285.8,194.9 287.6,194.6 289.3,193.3 291.1,194.7 292.9,193.9 294.7,194.2 296.5,194.1 298.3,194.1 300.1,193.9 301.8,195.2 303.6,194.3 305.4,194.1 307.2,194.7 309.0,194.1 310.8,195.0 312.6,193.8 314.4,194.8 316.1,194.5 317.9,193.8 319.7,193.6 321.5,194.7 323.3,194.8 325.1,193.6 326.9,196.3 328.6,193.4 330.4,193.4 332.2,195.0 334.0,193.4 335.8,194.0 337.6,193.9 339.4,195.8 341.1,194.5 342.9,194.3 344.7,194.5 346.5,194.5 348.3,194.4 350.1,196.1 351.9,194.3 353.6,194.7 355.4,194.3 357.2,194.5 359.0,194.2 360.8,194.0 362.6,193.0 364.4,194.8 366.1,193.1 367.9,194.4 369.7,194.9 371.5,195.2 373.3,193.7 375.1,195.3 376.9,193.6 378.7,194.0 380.4,194.6 382.2,194.7 384.0,193.9 385.8,194.2 387.6,193.8 389.4,194.2 391.2,194.6 392.9,193.9 394.7,195.1 396.5,193.7 398.3,194.2 400.1,195.0 401.9,194.9 403.7,194.5 405.4,195.5 407.2,193.3 409.0,193.6 410.8,195.0 412.6,194.3 414.4,193.1 416.2,194.0 417.9,194.9 419.7,195.7 421.5,195.4 423.3,193.4 425.1,194.0 426.9,195.2 428.7,193.8 430.4,194.5 432.2,194.7 434.0,194.6 435.8,194.6 437.6,193.1 439.4,194.9 441.2,194.5 443.0,193.4 444.7,193.2 446.5,195.0 448.3,192.9 450.1,193.5 451.9,195.3 453.7,193.0 455.5,195.3 457.2,193.8 459.0,195.1 460.8,193.7 462.6,193.7 464.4,194.0 466.2,194.4 468.0,194.2 469.7,194.4 471.5,194.5 473.3,195.0 475.1,193.9 476.9,194.2 478.7,194.5 480.5,194.7 482.2,194.5 484.0,195.3 485.8,194.5 487.6,195.0 489.4,193.4 491.2,195.0 493.0,194.6 494.8,194.3 496.5,193.8 498.3,194.0 500.1,194.3 501.9,192.8 503.7,194.3 505.5,194.0 507.3,192.3 509.0,194.8 510.8,193.6 512.6,193.9 514.4,195.1 516.2,194.6 518.0,193.6 519.8,195.2 521.5,194.3 523.3,193.6 525.1,194.4 526.9,194.0 528.7,194.7 530.5,194.7 532.3,194.6 534.0,194.4 535.8,193.8 537.6,194.1 539.4,192.9 541.2,193.9 543.0,194.0 544.8,192.7 546.5,194.3 548.3,194.8 550.1,194.1 551.9,195.0 553.7,193.9 555.5,193.3 557.3,193.8 559.1,194.5 560.8,194.3 562.6,193.9 564.4,193.4 566.2,194.5 568.0,194.5 569.8,193.5 571.6,194.0 573.3,193.9 575.1,193.9 576.9,194.7 578.7,194.3 580.5,193.5 582.3,194.3 584.1,194.3 585.8,194.0 587.6,193.9 589.4,192.4 591.2,194.7 593.0,194.1 594.8,192.8 596.6,194.1 598.3,193.9 600.1,195.2 601.9,193.5 603.7,193.6 605.5,193.6 607.3,194.3 609.1,193.9 610.8,194.2 612.6,193.6 614.4,194.2 616.2,193.6 618.0,195.1 619.8,194.4 621.6,194.3 623.4,194.2 625.1,193.6 626.9,194.3 628.7,192.5 630.5,194.8 632.3,194.4 634.1,194.8 635.9,194.5 637.6,194.5 639.4,195.2 641.2,194.8 643.0,192.7" fill="none" stroke="#7d55e6" stroke-width="2" stroke-linejoin="round" stroke-linecap="round"/>
</svg>
  <div style="position:absolute;left:0;top:242px"><table class="tb" style="width:626px"><tr class="hd"><td class="nm"><u>Name</u></td><td><u>Min</u></td><td><u>Max</u></td><td><u>Avg</u></td></tr><tr><td class="nm"><i style="background:#0772e3"></i><u>Total Requests</u></td><td><u>4.46K</u></td><td><u>5.34K</u></td><td><u>4.88K</u></td></tr><tr><td class="nm"><i style="background:#41ab39"></i><u>Valid Requests</u></td><td><u>3.83K</u></td><td><u>4.56K</u></td><td><u>4.15K</u></td></tr><tr><td class="nm"><i style="background:#7d55e6"></i><u>Filtered Requests</u></td><td><u>634</u></td><td><u>819</u></td><td><u>722</u></td></tr></table></div>
 </div>
 <div class="card" style="left:686px;top:390px;width:662px;height:355px;border-radius:7px 7px 0 0">
  <div class="ttl">Demo SSP 2</div>
  <svg class="ch" width="660" height="240" viewBox="0 0 660 240">
<line x1="46.2" y1="75.5" x2="644" y2="75.5" stroke="#e3e3e3" stroke-width="1"/>
<text x="39.6" y="77.8" text-anchor="end" class="yl">3K</text>
<line x1="46.2" y1="98.5" x2="644" y2="98.5" stroke="#e3e3e3" stroke-width="1"/>
<text x="39.6" y="100.3" text-anchor="end" class="yl">2.5K</text>
<line x1="46.2" y1="120.5" x2="644" y2="120.5" stroke="#e3e3e3" stroke-width="1"/>
<text x="39.6" y="122.8" text-anchor="end" class="yl">2K</text>
<line x1="46.2" y1="143.5" x2="644" y2="143.5" stroke="#e3e3e3" stroke-width="1"/>
<text x="39.6" y="145.3" text-anchor="end" class="yl">1.5K</text>
<line x1="46.2" y1="165.5" x2="644" y2="165.5" stroke="#e3e3e3" stroke-width="1"/>
<text x="39.6" y="167.8" text-anchor="end" class="yl">1K</text>
<line x1="46.2" y1="188.5" x2="644" y2="188.5" stroke="#e3e3e3" stroke-width="1"/>
<text x="39.6" y="190.3" text-anchor="end" class="yl">500</text>
<line x1="46.2" y1="210.5" x2="644" y2="210.5" stroke="#e3e3e3" stroke-width="1"/>
<text x="39.6" y="212.8" text-anchor="end" class="yl">0</text>
<text x="45.7" y="223.8" text-anchor="start" class="yl">02:47</text>
<text x="202.9" y="223.8" text-anchor="middle" class="yl">05:12</text>
<text x="359.9" y="223.8" text-anchor="middle" class="yl">07:37</text>
<text x="517.6" y="223.8" text-anchor="middle" class="yl">10:02</text>

<polyline points="46.2,93.5 48.0,93.8 49.7,99.8 51.5,95.6 53.3,102.2 55.0,95.5 56.8,89.8 58.5,96.1 60.3,89.5 62.1,93.2 63.8,96.5 65.6,100.1 67.4,91.5 69.1,92.0 70.9,99.3 72.7,95.6 74.4,90.4 76.2,96.7 77.9,92.9 79.7,100.8 81.5,97.4 83.2,91.8 85.0,98.4 86.8,99.3 88.5,99.3 90.3,95.9 92.0,99.8 93.8,94.9 95.6,92.6 97.3,89.3 99.1,95.9 100.9,89.1 102.6,92.7 104.4,95.2 106.2,92.7 107.9,89.3 109.7,89.3 111.4,91.8 113.2,94.6 115.0,91.5 116.7,93.6 118.5,93.7 120.3,93.4 122.0,88.1 123.8,98.4 125.6,94.6 127.3,98.0 129.1,91.4 130.8,90.6 132.6,89.7 134.4,95.3 136.1,94.1 137.9,91.5 139.7,93.5 141.4,93.2 143.2,93.5 145.0,93.2 146.7,94.5 148.5,92.6 150.2,99.1 152.0,95.7 153.8,98.7 155.5,94.5 157.3,96.7 159.1,92.3 160.8,89.8 162.6,103.7 164.3,96.7 166.1,93.0 167.9,89.3 169.6,91.5 171.4,92.5 173.2,94.2 174.9,95.5 176.7,92.8 178.5,92.3 180.2,93.5 182.0,96.0 183.7,99.4 185.5,96.8 187.3,95.1 189.0,97.7 190.8,92.6 192.6,98.5 194.3,94.6 196.1,92.2 197.9,90.7 199.6,92.6 201.4,89.3 203.1,95.4 204.9,96.0 206.7,89.8 208.4,96.5 210.2,94.1 212.0,99.6 213.7,89.9 215.5,91.4 217.3,96.2 219.0,99.6 220.8,92.9 222.5,92.7 224.3,89.7 226.1,87.5 227.8,93.1 229.6,94.4 231.4,94.4 233.1,94.7 234.9,98.4 236.6,96.8 238.4,94.1 240.2,99.5 241.9,98.3 243.7,89.9 245.5,96.3 247.2,91.3 249.0,90.3 250.8,94.0 252.5,91.3 254.3,94.8 256.0,97.1 257.8,94.4 259.6,93.9 261.3,93.7 263.1,93.9 264.9,95.4 266.6,90.5 268.4,94.7 270.2,95.5 271.9,90.8 273.7,97.4 275.4,94.1 277.2,89.2 279.0,94.0 280.7,89.4 282.5,94.9 284.3,95.8 286.0,94.5 287.8,95.9 289.6,95.3 291.3,95.7 293.1,91.5 294.8,93.1 296.6,95.2 298.4,96.9 300.1,83.7 301.9,95.2 303.7,89.9 305.4,98.5 307.2,97.0 308.9,90.4 310.7,98.3 312.5,98.1 314.2,94.6 316.0,96.8 317.8,95.3 319.5,93.7 321.3,91.3 323.1,93.5 324.8,93.1 326.6,89.6 328.3,89.3 330.1,95.2 331.9,100.1 333.6,97.2 335.4,90.2 337.2,95.4 338.9,96.0 340.7,95.1 342.5,88.2 344.2,93.3 346.0,94.7 347.7,95.8 349.5,97.2 351.3,84.0 353.0,103.6 354.8,93.1 356.6,94.6 358.3,89.8 360.1,96.8 361.9,94.4 363.6,95.4 365.4,92.2 367.1,85.8 368.9,93.7 370.7,96.4 372.4,94.3 374.2,96.2 376.0,96.2 377.7,93.3 379.5,92.7 381.3,95.8 383.0,89.9 384.8,93.8 386.5,93.2 388.3,95.3 390.1,92.4 391.8,92.3 393.6,91.5 395.4,96.4 397.1,91.5 398.9,95.5 400.6,93.2 402.4,91.0 404.2,88.5 405.9,95.1 407.7,97.3 409.5,93.1 411.2,89.5 413.0,94.8 414.8,85.5 416.5,99.9 418.3,88.5 420.0,89.6 421.8,89.9 423.6,96.4 425.3,89.1 427.1,89.8 428.9,89.6 430.6,94.6 432.4,94.6 434.2,89.4 435.9,92.7 437.7,95.1 439.4,96.8 441.2,93.2 443.0,98.7 444.7,92.3 446.5,93.6 448.3,99.5 450.0,92.7 451.8,90.1 453.6,93.4 455.3,98.7 457.1,96.1 458.8,91.3 460.6,98.5 462.4,95.4 464.1,90.3 465.9,95.0 467.7,96.1 469.4,91.5 471.2,88.8 472.9,92.9 474.7,98.8 476.5,99.7 478.2,95.2 480.0,105.2 481.8,94.7 483.5,91.4 485.3,103.4 487.1,95.0 488.8,93.3 490.6,96.2 492.3,93.1 494.1,92.7 495.9,90.8 497.6,85.2 499.4,93.2 501.2,97.4 502.9,97.7 504.7,98.4 506.5,91.8 508.2,93.0 510.0,102.4 511.7,93.4 513.5,88.7 515.3,90.3 517.0,90.7 518.8,96.5 520.6,95.2 522.3,98.5 524.1,96.2 525.9,93.8 527.6,98.1 529.4,96.2 531.1,87.3 532.9,94.7 534.7,99.2 536.4,98.3 538.2,94.4 540.0,91.2 541.7,94.4 543.5,91.1 545.2,92.9 547.0,97.7 548.8,90.5 550.5,95.5 552.3,87.5 554.1,95.9 555.8,94.3 557.6,95.7 559.4,94.8 561.1,92.3 562.9,94.6 564.6,89.9 566.4,92.4 568.2,88.5 569.9,93.7 571.7,89.6 573.5,89.8 575.2,94.3 577.0,85.2 578.8,88.6 580.5,91.8 582.3,94.2 584.0,93.7 585.8,93.9 587.6,92.3 589.3,97.1 591.1,93.2 592.9,95.3 594.6,87.7 596.4,90.7 598.2,87.6 599.9,85.2 601.7,91.7 603.4,86.5 605.2,92.0 607.0,91.1 608.7,96.5 610.5,92.9 612.3,88.4 614.0,91.5 615.8,94.6 617.5,93.3 619.3,95.7 621.1,95.5 622.8,98.1 624.6,89.4 626.4,89.5 628.1,93.7 629.9,97.9 631.7,94.2 633.4,83.6 635.2,97.8 636.9,95.0 638.7,94.9 640.5,90.7 642.2,97.7 644.0,92.6" fill="none" stroke="#0a76ee" stroke-width="2" stroke-linejoin="round" stroke-linecap="round"/>
<polyline points="46.2,108.8 48.0,109.1 49.7,114.8 51.5,110.8 53.3,117.1 55.0,110.7 56.8,105.3 58.5,111.4 60.3,105.0 62.1,108.6 63.8,111.7 65.6,115.1 67.4,107.0 69.1,107.4 70.9,114.3 72.7,110.9 74.4,105.9 76.2,111.9 77.9,108.3 79.7,115.8 81.5,112.5 83.2,107.3 85.0,113.5 86.8,114.4 88.5,114.3 90.3,111.2 92.0,114.9 93.8,110.1 95.6,108.0 97.3,104.8 99.1,111.1 100.9,104.7 102.6,108.0 104.4,110.5 106.2,108.0 107.9,104.8 109.7,104.8 111.4,107.2 113.2,109.9 115.0,106.9 116.7,108.9 118.5,109.0 120.3,108.7 122.0,103.7 123.8,113.5 125.6,109.9 127.3,113.2 129.1,106.8 130.8,106.1 132.6,105.2 134.4,110.6 136.1,109.4 137.9,107.0 139.7,108.9 141.4,108.6 143.2,108.8 145.0,108.6 146.7,109.8 148.5,108.0 150.2,114.2 152.0,110.9 153.8,113.8 155.5,109.8 157.3,111.8 159.1,107.7 160.8,105.3 162.6,118.5 164.3,111.9 166.1,108.4 167.9,104.8 169.6,106.9 171.4,107.9 173.2,109.5 174.9,110.7 176.7,108.2 178.5,107.7 180.2,108.9 182.0,111.3 183.7,114.5 185.5,112.0 187.3,110.4 189.0,112.8 190.8,108.0 192.6,113.6 194.3,109.9 196.1,107.6 197.9,106.2 199.6,108.0 201.4,104.9 203.1,110.7 204.9,111.3 206.7,105.3 208.4,111.7 210.2,109.5 212.0,114.6 213.7,105.4 215.5,106.8 217.3,111.4 219.0,114.7 220.8,108.3 222.5,108.1 224.3,105.2 226.1,103.1 227.8,108.4 229.6,109.7 231.4,109.7 233.1,110.0 234.9,113.5 236.6,112.0 238.4,109.4 240.2,114.5 241.9,113.4 243.7,105.4 245.5,111.5 247.2,106.7 249.0,105.8 250.8,109.3 252.5,106.7 254.3,110.1 256.0,112.3 257.8,109.7 259.6,109.2 261.3,109.0 263.1,109.2 264.9,110.7 266.6,106.0 268.4,110.0 270.2,110.7 271.9,106.3 273.7,112.5 275.4,109.4 277.2,104.7 279.0,109.3 280.7,104.9 282.5,110.2 284.3,111.0 286.0,109.8 287.8,111.1 289.6,110.6 291.3,110.9 293.1,107.0 294.8,108.4 296.6,110.4 298.4,112.1 300.1,99.5 301.9,110.5 303.7,105.5 305.4,113.6 307.2,112.1 308.9,105.9 310.7,113.4 312.5,113.2 314.2,109.9 316.0,112.0 317.8,110.5 319.5,109.1 321.3,106.7 323.1,108.9 324.8,108.5 326.6,105.2 328.3,104.9 330.1,110.4 331.9,115.2 333.6,112.3 335.4,105.7 337.2,110.6 338.9,111.2 340.7,110.4 342.5,103.8 344.2,108.6 346.0,110.0 347.7,111.1 349.5,112.4 351.3,99.9 353.0,118.5 354.8,108.5 356.6,109.9 358.3,105.4 360.1,112.0 361.9,109.7 363.6,110.6 365.4,107.6 367.1,101.5 368.9,109.0 370.7,111.6 372.4,109.6 374.2,111.4 376.0,111.4 377.7,108.7 379.5,108.0 381.3,111.1 383.0,105.4 384.8,109.1 386.5,108.5 388.3,110.6 390.1,107.8 391.8,107.8 393.6,107.0 395.4,111.6 397.1,106.9 398.9,110.8 400.6,108.5 402.4,106.5 404.2,104.1 405.9,110.4 407.7,112.5 409.5,108.5 411.2,105.0 413.0,110.1 414.8,101.2 416.5,114.9 418.3,104.1 420.0,105.1 421.8,105.4 423.6,111.6 425.3,104.6 427.1,105.3 428.9,105.1 430.6,109.9 432.4,109.9 434.2,104.9 435.9,108.1 437.7,110.4 439.4,112.0 441.2,108.5 443.0,113.8 444.7,107.7 446.5,109.0 448.3,114.5 450.0,108.1 451.8,105.7 453.6,108.7 455.3,113.7 457.1,111.3 458.8,106.7 460.6,113.6 462.4,110.7 464.1,105.8 465.9,110.3 467.7,111.3 469.4,106.9 471.2,104.4 472.9,108.3 474.7,113.9 476.5,114.8 478.2,110.4 480.0,120.0 481.8,110.0 483.5,106.8 485.3,118.2 487.1,110.3 488.8,108.6 490.6,111.4 492.3,108.5 494.1,108.1 495.9,106.3 497.6,100.9 499.4,108.6 501.2,112.5 502.9,112.9 504.7,113.5 506.5,107.2 508.2,108.4 510.0,117.3 511.7,108.7 513.5,104.3 515.3,105.8 517.0,106.2 518.8,111.7 520.6,110.5 522.3,113.6 524.1,111.4 525.9,109.1 527.6,113.2 529.4,111.4 531.1,103.0 532.9,110.0 534.7,114.3 536.4,113.4 538.2,109.7 540.0,106.7 541.7,109.7 543.5,106.6 545.2,108.3 547.0,112.9 548.8,106.0 550.5,110.7 552.3,103.2 554.1,111.1 555.8,109.6 557.6,111.0 559.4,110.1 561.1,107.8 562.9,109.9 564.6,105.4 566.4,107.8 568.2,104.1 569.9,109.0 571.7,105.1 573.5,105.4 575.2,109.6 577.0,101.0 578.8,104.2 580.5,107.2 582.3,109.5 584.0,109.0 585.8,109.2 587.6,107.7 589.3,112.3 591.1,108.6 592.9,110.6 594.6,103.3 596.4,106.2 598.2,103.3 599.9,101.0 601.7,107.1 603.4,102.2 605.2,107.4 607.0,106.6 608.7,111.7 610.5,108.3 612.3,104.0 614.0,107.0 615.8,109.9 617.5,108.6 619.3,110.9 621.1,110.7 622.8,113.2 624.6,105.0 626.4,105.0 628.1,109.0 629.9,113.0 631.7,109.5 633.4,99.4 635.2,113.0 636.9,110.3 638.7,110.2 640.5,106.2 642.2,112.8 644.0,108.0" fill="none" stroke="#44b23b" stroke-width="2" stroke-linejoin="round" stroke-linecap="round"/>
<polyline points="46.2,194.4 48.0,194.3 49.7,195.1 51.5,195.8 53.3,195.9 55.0,196.1 56.8,195.5 58.5,194.6 60.3,195.8 62.1,195.9 63.8,196.2 65.6,194.6 67.4,195.4 69.1,196.8 70.9,194.1 72.7,194.2 74.4,195.2 76.2,195.6 77.9,195.3 79.7,196.1 81.5,194.3 83.2,193.9 85.0,194.2 86.8,195.0 88.5,195.0 90.3,194.7 92.0,193.6 93.8,196.1 95.6,195.3 97.3,196.0 99.1,196.5 100.9,194.9 102.6,194.2 104.4,196.3 106.2,194.3 107.9,194.6 109.7,194.8 111.4,193.9 113.2,195.9 115.0,193.7 116.7,195.6 118.5,194.8 120.3,196.8 122.0,194.4 123.8,195.3 125.6,195.8 127.3,196.3 129.1,195.1 130.8,194.0 132.6,194.8 134.4,194.7 136.1,196.0 137.9,196.3 139.7,195.6 141.4,196.8 143.2,195.7 145.0,194.2 146.7,195.4 148.5,195.5 150.2,195.9 152.0,194.6 153.8,194.7 155.5,193.9 157.3,196.0 159.1,196.4 160.8,195.9 162.6,196.5 164.3,195.4 166.1,195.8 167.9,196.2 169.6,195.4 171.4,194.4 173.2,194.7 174.9,196.0 176.7,195.3 178.5,195.1 180.2,194.7 182.0,195.8 183.7,196.7 185.5,195.1 187.3,196.4 189.0,195.8 190.8,195.7 192.6,194.5 194.3,195.9 196.1,195.2 197.9,195.6 199.6,195.9 201.4,194.5 203.1,195.8 204.9,194.9 206.7,195.1 208.4,197.2 210.2,197.1 212.0,198.5 213.7,195.2 215.5,195.2 217.3,196.0 219.0,195.9 220.8,195.8 222.5,196.0 224.3,195.5 226.1,195.5 227.8,196.4 229.6,194.1 231.4,192.4 233.1,195.9 234.9,193.4 236.6,193.2 238.4,194.3 240.2,194.4 241.9,196.1 243.7,195.8 245.5,197.1 247.2,195.9 249.0,194.5 250.8,195.9 252.5,197.1 254.3,193.9 256.0,193.5 257.8,194.0 259.6,196.9 261.3,194.7 263.1,196.3 264.9,195.6 266.6,194.8 268.4,194.0 270.2,196.1 271.9,195.8 273.7,196.7 275.4,195.5 277.2,196.4 279.0,196.0 280.7,194.7 282.5,195.4 284.3,195.3 286.0,195.1 287.8,194.6 289.6,194.0 291.3,196.5 293.1,196.9 294.8,194.8 296.6,194.6 298.4,194.0 300.1,194.6 301.9,193.6 303.7,194.8 305.4,196.0 307.2,194.4 308.9,196.2 310.7,196.1 312.5,195.0 314.2,195.6 316.0,194.5 317.8,195.7 319.5,193.6 321.3,196.4 323.1,194.7 324.8,195.8 326.6,194.0 328.3,195.9 330.1,194.6 331.9,198.4 333.6,196.0 335.4,193.7 337.2,195.1 338.9,195.2 340.7,194.4 342.5,192.9 344.2,196.3 346.0,195.3 347.7,195.7 349.5,194.5 351.3,195.9 353.0,196.7 354.8,196.7 356.6,194.6 358.3,195.0 360.1,194.4 361.9,193.7 363.6,196.1 365.4,195.8 367.1,194.4 368.9,194.8 370.7,195.4 372.4,196.2 374.2,195.1 376.0,195.7 377.7,194.4 379.5,193.5 381.3,195.1 383.0,196.4 384.8,192.9 386.5,194.7 388.3,194.8 390.1,195.2 391.8,195.1 393.6,195.2 395.4,195.0 397.1,196.8 398.9,196.0 400.6,195.4 402.4,195.1 404.2,195.1 405.9,194.9 407.7,197.1 409.5,196.2 411.2,195.9 413.0,195.1 414.8,195.4 416.5,193.3 418.3,195.6 420.0,195.5 421.8,196.8 423.6,193.5 425.3,195.2 427.1,195.4 428.9,195.9 430.6,195.2 432.4,195.7 434.2,194.2 435.9,196.1 437.7,195.8 439.4,195.8 441.2,194.7 443.0,195.0 444.7,194.3 446.5,194.8 448.3,194.8 450.0,195.3 451.8,194.4 453.6,194.8 455.3,195.0 457.1,196.9 458.8,195.8 460.6,196.0 462.4,197.1 464.1,194.1 465.9,194.0 467.7,194.3 469.4,194.8 471.2,193.9 472.9,197.0 474.7,194.2 476.5,197.4 478.2,195.3 480.0,195.3 481.8,194.9 483.5,194.8 485.3,194.7 487.1,196.1 488.8,196.1 490.6,196.2 492.3,195.3 494.1,195.8 495.9,197.0 497.6,194.6 499.4,196.6 501.2,196.0 502.9,196.3 504.7,196.3 506.5,195.0 508.2,196.2 510.0,197.0 511.7,196.2 513.5,196.6 515.3,197.1 517.0,194.7 518.8,194.5 520.6,198.5 522.3,194.1 524.1,193.8 525.9,196.9 527.6,195.1 529.4,195.8 531.1,194.7 532.9,198.4 534.7,194.9 536.4,195.9 538.2,195.0 540.0,194.6 541.7,197.8 543.5,195.5 545.2,195.5 547.0,194.9 548.8,194.4 550.5,194.8 552.3,196.3 554.1,194.8 555.8,196.2 557.6,194.7 559.4,195.6 561.1,195.7 562.9,195.3 564.6,197.0 566.4,195.8 568.2,196.6 569.9,194.5 571.7,194.2 573.5,196.8 575.2,197.6 577.0,195.2 578.8,195.9 580.5,196.3 582.3,193.1 584.0,195.8 585.8,196.4 587.6,195.7 589.3,195.2 591.1,193.9 592.9,195.1 594.6,196.7 596.4,195.9 598.2,193.6 599.9,197.1 601.7,195.5 603.4,194.3 605.2,195.2 607.0,195.6 608.7,196.3 610.5,195.3 612.3,194.9 614.0,195.2 615.8,194.4 617.5,195.2 619.3,194.2 621.1,195.3 622.8,194.5 624.6,195.7 626.4,193.7 628.1,194.1 629.9,194.7 631.7,196.3 633.4,195.2 635.2,198.2 636.9,195.7 638.7,195.2 640.5,196.2 642.2,195.3 644.0,194.7" fill="none" stroke="#7d55e6" stroke-width="2" stroke-linejoin="round" stroke-linecap="round"/>
</svg>
  <div style="position:absolute;left:0;top:242px"><table class="tb" style="width:627px"><tr class="hd"><td class="nm"><u>Name</u></td><td><u>Min</u></td><td><u>Max</u></td><td><u>Avg</u></td></tr><tr><td class="nm"><i style="background:#0772e3"></i><u>Total Requests</u></td><td><u>2.35K</u></td><td><u>2.82K</u></td><td><u>2.58K</u></td></tr><tr><td class="nm"><i style="background:#41ab39"></i><u>Valid Requests</u></td><td><u>2.04K</u></td><td><u>2.5K</u></td><td><u>2.24K</u></td></tr><tr><td class="nm"><i style="background:#7d55e6"></i><u>Filtered Requests</u></td><td><u>267</u></td><td><u>405</u></td><td><u>336</u></td></tr></table></div>
 </div>
</div>
</body></html>
